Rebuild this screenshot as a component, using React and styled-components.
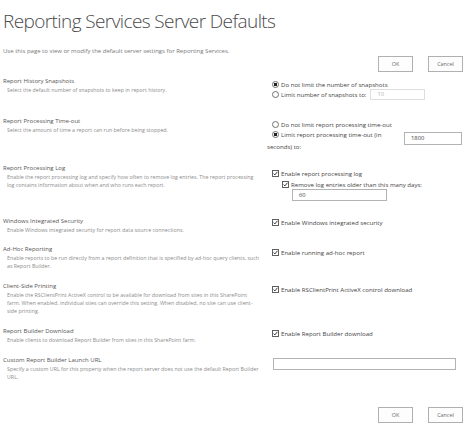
import React from "react";
import styled, { createGlobalStyle } from "styled-components";

const GlobalStyle = createGlobalStyle`
  html, body { margin: 0; padding: 0; background: #fff; }
  body { font-family: "Open Sans", "Liberation Sans", sans-serif; color: #444; }
`;

const Page = styled.div`
  width: 474px;
  height: 432px;
  padding: 0 11px 0 3px;
  box-sizing: border-box;
  overflow: hidden;
`;

const Title = styled.h1`
  margin: 0;
  padding-top: 9px;
  font-size: 19px;
  font-weight: 300;
  line-height: 24px;
  color: #4a4a4a;
  letter-spacing: -0.6px;
  white-space: nowrap;
`;

const Intro = styled.p`
  margin: 14px 0 0;
  font-size: 6px;
  line-height: 8px;
  color: #777;
`;

const ButtonBar = styled.div`
  display: flex;
  justify-content: flex-end;
  gap: 15px;
  margin-top: ${(p) => p.$top}px;
`;

const Button = styled.button`
  width: 35px;
  height: 16px;
  padding: 0;
  border: 1px solid #b0b0b0;
  background: #fdfdfd;
  color: #666;
  font-family: inherit;
  font-size: 5.4px;
`;

const Section = styled.div`
  display: grid;
  grid-template-columns: 264px 1fr;
  min-height: ${(p) => p.$h}px;
`;

const Info = styled.div`
  padding-right: 6px;
`;

const Label = styled.div`
  font-size: 6px;
  line-height: 9px;
  color: #555;
`;

const Desc = styled.div`
  padding-left: 4px;
  font-size: 5.3px;
  line-height: 8px;
  color: #8c8c8c;
`;

const Controls = styled.div`
  padding-top: ${(p) => p.$pt ?? 2.5}px;
  font-size: 6.1px;
  color: #444;
`;

const Row = styled.div`
  display: flex;
  align-items: center;
  height: ${(p) => p.$h ?? 10}px;
  padding-left: ${(p) => p.$indent ?? 0}px;
`;

const Radio = styled.span`
  display: inline-block;
  flex: none;
  width: 7px;
  height: 7px;
  box-sizing: border-box;
  margin: 0 2px 0 5px;
  border: 1px solid #707070;
  border-radius: 50%;
  background: ${(p) =>
    p.$on ? "radial-gradient(circle, #222 0 1.6px, #fff 1.9px)" : "#fff"};
  vertical-align: -1px;
`;

const Box = styled.span`
  display: inline-flex;
  flex: none;
  align-items: center;
  justify-content: center;
  width: 7px;
  height: 7px;
  box-sizing: border-box;
  margin: 0 2px 0 5px;
  border: 1px solid #606060;
  background: #fff;
`;

const TextBox = styled.div`
  flex: none;
  box-sizing: border-box;
  width: ${(p) => p.$w}px;
  height: ${(p) => p.$h ?? 12}px;
  margin: ${(p) => p.$m ?? "0"};
  padding-left: 6px;
  border: 1px solid ${(p) => (p.$off ? "#dedede" : "#b3b3b3")};
  background: #fff;
  color: ${(p) => (p.$off ? "#b5b5b5" : "#444")};
  font-size: 5.8px;
  line-height: ${(p) => (p.$h ?? 12) - 2}px;
`;

const SplitRow = styled.div`
  display: flex;
  align-items: flex-start;
`;

const WrapLabel = styled.div`
  width: 134px;
  line-height: 12px;
`;

const Check = () => (
  <svg width="5" height="5" viewBox="0 0 5 5">
    <path d="M0.6 2.6 L1.9 3.9 L4.4 0.8" fill="none" stroke="#222" strokeWidth="0.9" />
  </svg>
);

const Checkbox = () => (
  <Box>
    <Check />
  </Box>
);

const Setting = ({ h, label, desc, pt, children }) => (
  <Section $h={h}>
    <Info>
      <Label>{label}</Label>
      <Desc>{desc}</Desc>
    </Info>
    <Controls $pt={pt}>{children}</Controls>
  </Section>
);

export default function App() {
  return (
    <Page>
      <GlobalStyle />
      <Title>Reporting Services Server Defaults</Title>
      <Intro>Use this page to view or modify the default server settings for Reporting Services.</Intro>
      <ButtonBar $top={1}>
        <Button>OK</Button>
        <Button>Cancel</Button>
      </ButtonBar>

      <div style={{ marginTop: 4.5 }} />

      <Setting
        h={40}
        label="Report History Snapshots"
        desc="Select the default number of snapshots to keep in report history."
      >
        <Row>
          <Radio $on />
          Do not limit the number of snapshots
        </Row>
        <Row>
          <Radio />
          Limit number of snapshots to:
          <TextBox $w={55} $h={11} $m="0 0 0 4px" $off>
            10
          </TextBox>
        </Row>
      </Setting>

      <Setting
        h={47}
        label="Report Processing Time-out"
        desc="Select the amount of time a report can run before being stopped."
      >
        <Row>
          <Radio />
          Do not limit report processing time-out
        </Row>
        <SplitRow>
          <WrapLabel>
            <Radio $on />
            Limit report processing time-out (in seconds) to:
          </WrapLabel>
          <TextBox $w={58} $h={13} $m="3px 0 0 3px">
            1800
          </TextBox>
        </SplitRow>
      </Setting>

      <Setting
        h={53}
        pt={4}
        label="Report Processing Log"
        desc="Enable the report processing log and specify how often to remove log entries. The report processing log contains information about when and who runs each report."
      >
        <Row $h={11}>
          <Checkbox />
          Enable report processing log
        </Row>
        <Row $h={11} $indent={10}>
          <Checkbox />
          Remove log entries older than this many days:
        </Row>
        <TextBox $w={95} $m="-1px 0 0 25px">
          60
        </TextBox>
      </Setting>

      <Setting
        h={28}
        pt={1}
        label="Windows Integrated Security"
        desc="Enable Windows integrated security for report data source connections."
      >
        <Row>
          <Checkbox />
          Enable Windows integrated security
        </Row>
      </Setting>

      <Setting
        h={37}
        label="Ad-Hoc Reporting"
        desc="Enable reports to be run directly from a report definition that is specified by ad-hoc query clients, such as Report Builder."
      >
        <Row>
          <Checkbox />
          Enable running ad-hoc report
        </Row>
      </Setting>

      <Setting
        h={45}
        label="Client-Side Printing"
        desc="Enable the RSClientPrint ActiveX control to be available for download from sites in this SharePoint farm. When enabled, individual sites can override this setting. When disabled, no site can use client-side printing."
      >
        <Row>
          <Checkbox />
          Enable RSClientPrint ActiveX control download
        </Row>
      </Setting>

      <Setting
        h={29}
        pt={1.5}
        label="Report Builder Download"
        desc="Enable clients to download Report Builder from sites in this SharePoint farm."
      >
        <Row>
          <Checkbox />
          Enable Report Builder download
        </Row>
      </Setting>

      <Setting
        h={40}
        label="Custom Report Builder Launch URL"
        desc="Specify a custom URL for this property when the report server does not use the default Report Builder URL."
      >
        <TextBox $w={183} $m="0 0 0 6px" />
      </Setting>

      <ButtonBar $top={11.5}>
        <Button>OK</Button>
        <Button>Cancel</Button>
      </ButtonBar>
    </Page>
  );
}
